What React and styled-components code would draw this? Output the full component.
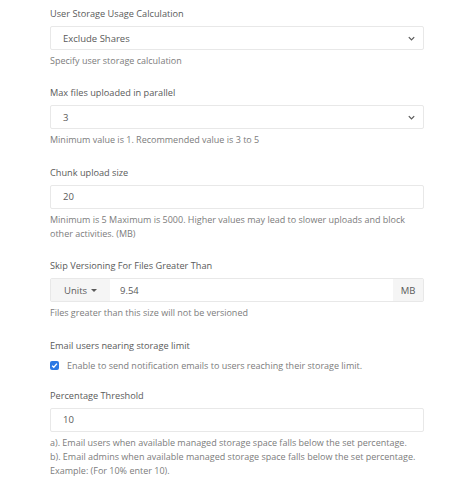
import React from 'react';
import styled, {createGlobalStyle} from 'styled-components';

const GlobalStyle = createGlobalStyle`
   body {
      margin: 0;
      background: #ffffff;
      font-family: "Open Sans", "Noto Sans", sans-serif;
      color: #5a5a5a;
   }
`;

const Page = styled.div`
   width: 374px;
   padding: 7px 0 0 50px;
`;

const FormGroup = styled.div`
   display: flex;
   flex-direction: column;
   margin-bottom: ${props => props.tight ? 16 : 18.4}px;
`;

const Label = styled.div`
   font-size: 9.2px;
   line-height: 14px;
   color: #5a5a5a;
   margin-bottom: ${props => props.gap || 5}px;
`;

const Control = styled.div`
   display: flex;
   align-items: center;
   box-sizing: border-box;
   height: 24px;
   padding: 0 12px;
   border: 1px solid #e8e8e8;
   border-radius: 2px;
   background: #ffffff;
   font-size: 9.5px;
   color: #5a5a5a;
`;

const SelectBox = styled(Control)`
   justify-content: space-between;
   padding-right: 7px;
`;

const Help = styled.div`
   margin-top: 4px;
   font-size: 9px;
   line-height: 14px;
   color: #7c7c7c;
`;

const InputGroup = styled.div`
   display: flex;
   box-sizing: border-box;
   height: 24px;
   border: 1px solid #e8e8e8;
   border-radius: 2px;
   font-size: 9.5px;
`;

const Addon = styled.div`
   display: flex;
   align-items: center;
   justify-content: ${props => props.center ? 'center' : 'flex-start'};
   width: ${props => props.width}px;
   padding-left: ${props => props.center ? 0 : 13}px;
   box-sizing: border-box;
   background: #f5f5f5;
   color: #5a5a5a;
`;

const Caret = styled.span`
   display: inline-block;
   margin-left: 4px;
   border-top: 3px solid #5a5a5a;
   border-left: 3px solid transparent;
   border-right: 3px solid transparent;
`;

const GroupInput = styled.div`
   flex: 1;
   display: flex;
   align-items: center;
   padding-left: 10px;
   color: #5a5a5a;
`;

const CheckRow = styled.label`
   display: flex;
   align-items: center;
   gap: 8px;
   font-size: 9px;
   line-height: 14px;
   color: #7c7c7c;
`;

const CheckBox = styled.span`
   display: flex;
   align-items: center;
   justify-content: center;
   width: 9px;
   height: 9px;
   border-radius: 2px;
   background: #2a78e4;
`;

const Chevron = () => (
   <svg width="9" height="9" viewBox="0 0 10 10">
      <path d="M2 3.5 L5 6.5 L8 3.5" fill="none" stroke="#5a5a5a" strokeWidth="1.4" />
   </svg>
);

export default function App() {
   return <>
      <GlobalStyle/>
      <Page>
         <FormGroup>
            <Label>User Storage Usage Calculation</Label>
            <SelectBox>Exclude Shares <Chevron/></SelectBox>
            <Help>Specify user storage calculation</Help>
         </FormGroup>
         <FormGroup>
            <Label>Max files uploaded in parallel</Label>
            <SelectBox>3 <Chevron/></SelectBox>
            <Help>Minimum value is 1. Recommended value is 3 to 5</Help>
         </FormGroup>
         <FormGroup>
            <Label>Chunk upload size</Label>
            <Control>20</Control>
            <Help>Minimum is 5 Maximum is 5000. Higher values may lead to slower uploads and block other activities. (MB)</Help>
         </FormGroup>
         <FormGroup>
            <Label>Skip Versioning For Files Greater Than</Label>
            <InputGroup>
               <Addon width={59}>Units<Caret/></Addon>
               <GroupInput>9.54</GroupInput>
               <Addon width={30} center>MB</Addon>
            </InputGroup>
            <Help>Files greater than this size will not be versioned</Help>
         </FormGroup>
         <FormGroup tight>
            <Label gap={6}>Email users nearing storage limit</Label>
            <CheckRow>
               <CheckBox>
                  <svg width="7" height="7" viewBox="0 0 8 8">
                     <path d="M1.3 4.2 L3.2 6 L6.8 1.8" fill="none" stroke="#ffffff" strokeWidth="1.5" />
                  </svg>
               </CheckBox>
               Enable to send notification emails to users reaching their storage limit.
            </CheckRow>
         </FormGroup>
         <FormGroup>
            <Label>Percentage Threshold</Label>
            <Control>10</Control>
            <Help>
               a). Email users when available managed storage space falls below the set percentage.<br/>
               b). Email admins when available managed storage space falls below the set percentage.<br/>
               Example: (For 10% enter 10).
            </Help>
         </FormGroup>
      </Page>
   </>;
}
